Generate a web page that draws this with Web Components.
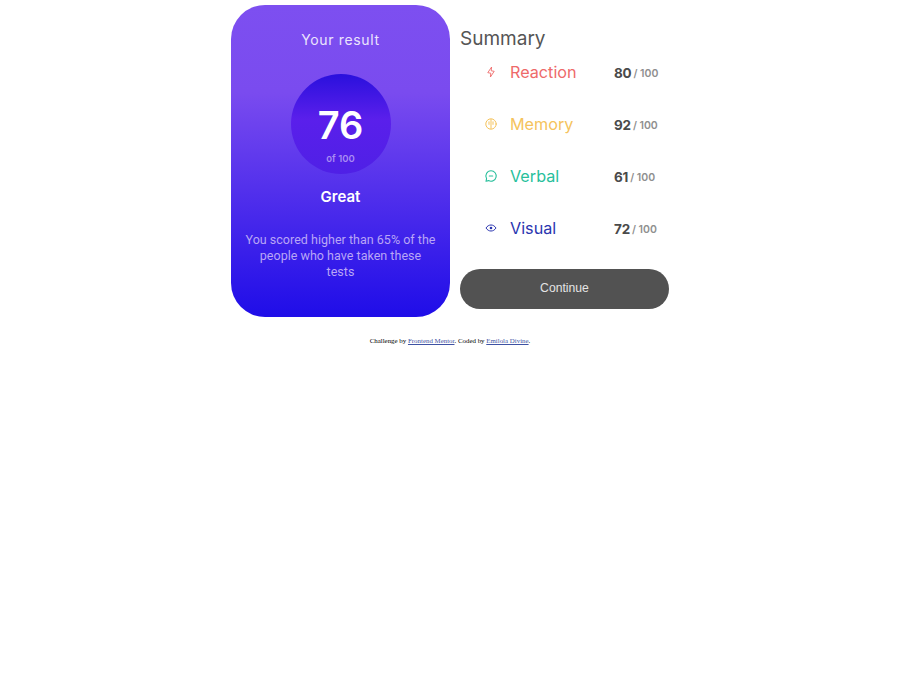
<!DOCTYPE html>
<html>
<head>
<meta charset="utf-8">
<title>Results summary</title>
<style>
  html, body { margin: 0; background: #fff; }
  body { padding-top: 5px; display: flex; flex-direction: column; align-items: center; }
</style>
</head>
<body>
<result-app></result-app>
<page-credit></page-credit>

<script>
class ResultCard extends HTMLElement {
    constructor() {
        super();
        this.shadowDOM = this.attachShadow({mode: 'open'});
        this.shadowDOM.innerHTML = `
            <style>
                :host {
                    display: flex;
                    flex-direction: column;
                    align-items: center;
                    box-sizing: border-box;
                    width: 219px;
                    height: 312px;
                    padding-top: 25px;
                    border-radius: 34px;
                    background: linear-gradient(180deg, #7d4ff0 0%, #7a4bef 28%, #1f0de8 100%);
                    font-family: Inter, "Noto Sans", sans-serif;
                    color: #fff;
                }
                .head { font-size: 14px; line-height: 20px; letter-spacing: 0.65px; color: #ebe4fd; }
                .circle {
                    width: 100px;
                    height: 100px;
                    margin-top: 24px;
                    border-radius: 50%;
                    background: linear-gradient(180deg, #2a10dd 0%, #5a1feb 45%, #4f20e6 100%);
                    display: flex;
                    flex-direction: column;
                    align-items: center;
                }
                .score { margin-top: 28px; font-size: 38px; line-height: 46px; font-weight: 600; }
                .of { font-size: 9.5px; line-height: 14px; margin-top: 4px; font-weight: 600; color: #a98cf3; }
                .word { margin-top: 13px; font-size: 15px; line-height: 20px; font-weight: 600; }
                .text {
                    margin-top: 25px;
                    width: 192px;
                    text-align: center;
                    font-family: Roboto, sans-serif;
                    font-size: 12.5px;
                    line-height: 16px;
                    letter-spacing: 0.02px;
                    color: #b9a6f6;
                }
            </style>
            <div class="head">Your result</div>
            <div class="circle">
                <div class="score">76</div>
                <div class="of">of 100</div>
            </div>
            <div class="word">Great</div>
            <div class="text">You scored higher than 65% of the<br>people who have taken these<br>tests</div>
        `;
    }
}

class ScoreRow extends HTMLElement {
    constructor() {
        super();
        this.shadowDOM = this.attachShadow({mode: 'open'});
        this.shadowDOM.innerHTML = `
            <style>
                :host {
                    display: flex;
                    align-items: center;
                    height: 24px;
                    font-family: Inter, "Noto Sans", sans-serif;
                }
                .icon { width: 14px; height: 14px; margin-left: 24px; display: flex; color: var(--row-color); }
                .name { width: 104px; margin-left: 12px; font-size: 16.2px; line-height: 24px; color: var(--row-color); }
                .val { font-size: 13.5px; font-weight: 700; letter-spacing: -0.2px; color: #4a4a4a; padding-top: 2px; }
                .max { margin-left: 2px; font-size: 10.5px; font-weight: 600; color: #8f8f8f; padding-top: 3px; }
                ::slotted(svg) { width: 14px; height: 14px; }
            </style>
            <span class="icon"><slot name="icon"></slot></span>
            <span class="name"><slot></slot></span>
            <span class="val"></span><span class="max">/ 100</span>
        `;
    }

    connectedCallback() {
        this.style.setProperty('--row-color', this.getAttribute('color'));
        this.shadowDOM.querySelector('.val').textContent = this.getAttribute('value');
    }
}

class SummaryPanel extends HTMLElement {
    constructor() {
        super();
        this.shadowDOM = this.attachShadow({mode: 'open'});
        this.shadowDOM.innerHTML = `
            <style>
                :host {
                    display: flex;
                    flex-direction: column;
                    width: 209px;
                    font-family: Inter, "Noto Sans", sans-serif;
                }
                h2 { margin: 22px 0 0; font-size: 19px; line-height: 24px; font-weight: 400; color: #555; }
                .rows { display: flex; flex-direction: column; gap: 28px; margin-top: 9px; }
                button {
                    margin-top: 29px;
                    height: 40px;
                    padding: 0 0 2px;
                    border: 0;
                    border-radius: 20px;
                    background: #525252;
                    color: #e4e4e4;
                    font: 12.2px "Liberation Sans", Arial, sans-serif;
                }
            </style>
            <h2>Summary</h2>
            <div class="rows"><slot></slot></div>
            <button>Continue</button>
        `;
    }
}

class ResultApp extends HTMLElement {
    constructor() {
        super();
        this.shadowDOM = this.attachShadow({mode: 'open'});
        this.shadowDOM.innerHTML = `
            <style>
                :host { display: flex; gap: 10px; }
            </style>
            <result-card></result-card>
            <summary-panel>
                <score-row color="#ee6a6a" value="80">
                    <svg slot="icon" viewBox="0 0 14 14" fill="none" stroke="currentColor" stroke-width=".9" stroke-linejoin="round"><path d="M7.6 2 7.2 5.800 10.200 6.300 6.400 12l.4-3.800L3.800 7.700z"/></svg>
                    Reaction
                </score-row>
                <score-row color="#f5c35c" value="92">
                    <svg slot="icon" viewBox="0 0 14 14" fill="none" stroke="currentColor" stroke-width="1" stroke-linecap="round"><circle cx="7" cy="7" r="5.200"/><path d="M7 2.500v9M5 4.800v2.600M9 4.800v2.600"/></svg>
                    Memory
                </score-row>
                <score-row color="#28bf9c" value="61">
                    <svg slot="icon" viewBox="0 0 14 14" fill="none" stroke="currentColor" stroke-width="1.100" stroke-linecap="round" stroke-linejoin="round"><path d="M7 1.800a5.200 5.200 0 1 1-2.400 9.800L2 12.300l.6-2.600A5.200 5.200 0 0 1 7 1.800z"/><path d="M5.300 7h3.400"/></svg>
                    Verbal
                </score-row>
                <score-row color="#2a35b0" value="72">
                    <svg slot="icon" viewBox="0 0 14 14" fill="none" stroke="currentColor" stroke-width="1"><path d="M2 7c1.300-2 3-3 5-3s3.700 1 5 3c-1.300 2-3 3-5 3S3.300 9 2 7z"/><circle cx="7" cy="7" r="1.300" fill="currentColor" stroke="none"/></svg>
                    Visual
                </score-row>
            </summary-panel>
        `;
    }
}

class PageCredit extends HTMLElement {
    constructor() {
        super();
        this.shadowDOM = this.attachShadow({mode: 'open'});
        this.shadowDOM.innerHTML = `
            <style>
                :host {
                    display: block;
                    margin-top: 20px;
                    font: 6.9px/1.3 "Liberation Serif", serif;
                    color: #000;
                    text-align: center;
                }
                a { color: hsl(228, 45%, 44%); }
            </style>
            Challenge by <a href="#">Frontend Mentor</a>. Coded by <a href="#">Emilola Divine</a>.
        `;
    }
}

customElements.define('result-card', ResultCard);
customElements.define('score-row', ScoreRow);
customElements.define('summary-panel', SummaryPanel);
customElements.define('result-app', ResultApp);
customElements.define('page-credit', PageCredit);
</script>
</body>
</html>
